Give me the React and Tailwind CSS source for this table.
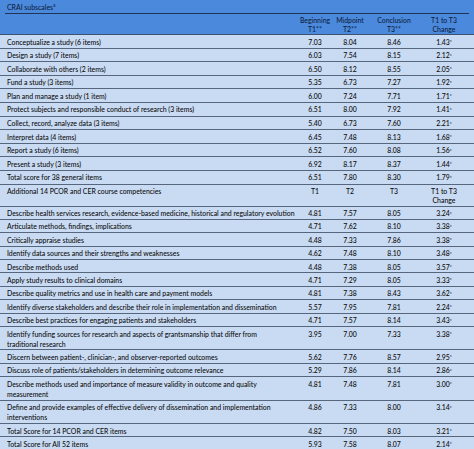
import React from "react";

const general = [
  ["Conceptualize a study (6 items)", "7.03", "8.04", "8.46", "1.43"],
  ["Design a study (7 items)", "6.03", "7.54", "8.15", "2.12"],
  ["Collaborate with others (2 items)", "6.50", "8.12", "8.55", "2.05"],
  ["Fund a study (3 items)", "5.35", "6.73", "7.27", "1.92"],
  ["Plan and manage a study (1 item)", "6.00", "7.24", "7.71", "1.71"],
  ["Protect subjects and responsible conduct of research (3 items)", "6.51", "8.00", "7.92", "1.41"],
  ["Collect, record, analyze data (3 items)", "5.40", "6.73", "7.60", "2.21"],
  ["Interpret data (4 items)", "6.45", "7.48", "8.13", "1.68"],
  ["Report a study (6 items)", "6.52", "7.60", "8.08", "1.56"],
  ["Present a study (3 items)", "6.92", "8.17", "8.37", "1.44"],
  ["Total score for 38 general items", "6.51", "7.80", "8.30", "1.79"],
];

const pcor = [
  [["Describe health services research, evidence-based medicine, historical and regulatory evolution"], "4.81", "7.57", "8.05", "3.24"],
  [["Articulate methods, findings, implications"], "4.71", "7.62", "8.10", "3.38"],
  [["Critically appraise studies"], "4.48", "7.33", "7.86", "3.38"],
  [["Identify data sources and their strengths and weaknesses"], "4.62", "7.48", "8.10", "3.48"],
  [["Describe methods used"], "4.48", "7.38", "8.05", "3.57"],
  [["Apply study results to clinical domains"], "4.71", "7.29", "8.05", "3.33"],
  [["Describe quality metrics and use in health care and payment models"], "4.81", "7.38", "8.43", "3.62"],
  [["Identify diverse stakeholders and describe their role in implementation and dissemination"], "5.57", "7.95", "7.81", "2.24"],
  [["Describe best practices for engaging patients and stakeholders"], "4.71", "7.57", "8.14", "3.43"],
  [["Identify funding sources for research and aspects of grantsmanship that differ from", "traditional research"], "3.95", "7.00", "7.33", "3.38"],
  [["Discern between patient-, clinician-, and observer-reported outcomes"], "5.62", "7.76", "8.57", "2.95"],
  [["Discuss role of patients/stakeholders in determining outcome relevance"], "5.29", "7.86", "8.14", "2.86"],
  [["Describe methods used and importance of measure validity in outcome and quality", "measurement"], "4.81", "7.48", "7.81", "3.00"],
  [["Define and provide examples of effective delivery of dissemination and implementation", "interventions"], "4.86", "7.33", "8.00", "3.14"],
  [["Total Score for 14 PCOR and CER items"], "4.82", "7.50", "8.03", "3.21"],
  [["Total Score for All 52 items"], "5.93", "7.58", "8.07", "2.14"],
];

const grid = "grid grid-cols-[294px_36px_34px_54px_46px] pl-[3px]";

function Row({ lines, vals, h }) {
  return (
    <div className={`${grid} items-start pt-[1.5px] border-b border-[#56667c] ${h}`}>
      <div className="pl-[4px] leading-[10px] whitespace-nowrap">
        {lines.map((l, i) => (
          <div key={i}>{l}</div>
        ))}
      </div>
      <div className="text-center leading-[10px]">{vals[0]}</div>
      <div className="text-center leading-[10px]">{vals[1]}</div>
      <div className="text-center leading-[10px]">{vals[2]}</div>
      <div className="text-center leading-[10px]">
        {vals[3]}
        <sup className="text-[4.8px] relative top-[-0.5px]">*</sup>
      </div>
    </div>
  );
}

export default function App() {
  return (
    <div className="w-[474px] h-[449px] overflow-hidden bg-[#c9dbf3] text-[6.9px] font-medium text-[#0d0d0d] font-['Lato','Liberation_Sans',Arial,sans-serif]">
      <div className="bg-[#4b89dd] text-[#0e1f3d] border-b border-[#3d5270]">
        <div className="h-[14px] mx-[5px] border-b border-[#1f3558] flex items-center pl-[2px] pt-[1px]">
          CRAI subscales<sup className="text-[4.8px]">a</sup>
        </div>
        <div className={`${grid} h-[20px] items-start pt-[2px] leading-[8.5px]`}>
          <div></div>
          <div className="text-center">
            <div>Beginning</div>
            <div>T1**</div>
          </div>
          <div className="text-center">
            <div>Midpoint</div>
            <div>T2**</div>
          </div>
          <div className="text-center">
            <div>Conclusion</div>
            <div>T3**</div>
          </div>
          <div className="text-center">
            <div>T1 to T3</div>
            <div>Change</div>
          </div>
        </div>
      </div>
      {general.map((r, i) => (
        <Row key={i} lines={[r[0]]} vals={r.slice(1)} h="h-[13.6px]" />
      ))}
      <div className={`${grid} h-[22px] items-start pt-[2.5px] leading-[9px] border-b border-[#56667c]`}>
        <div className="pl-[4px]">Additional 14 PCOR and CER course competencies</div>
        <div className="text-center">T1</div>
        <div className="text-center">T2</div>
        <div className="text-center">T3</div>
        <div className="text-center">
          <div>T1 to T3</div>
          <div>Change</div>
        </div>
      </div>
      {pcor.map((r, i) => (
        <Row
          key={i}
          lines={r[0]}
          vals={r.slice(1)}
          h={r[0].length > 1 ? "h-[23.4px]" : "h-[13.4px]"}
        />
      ))}
    </div>
  );
}
